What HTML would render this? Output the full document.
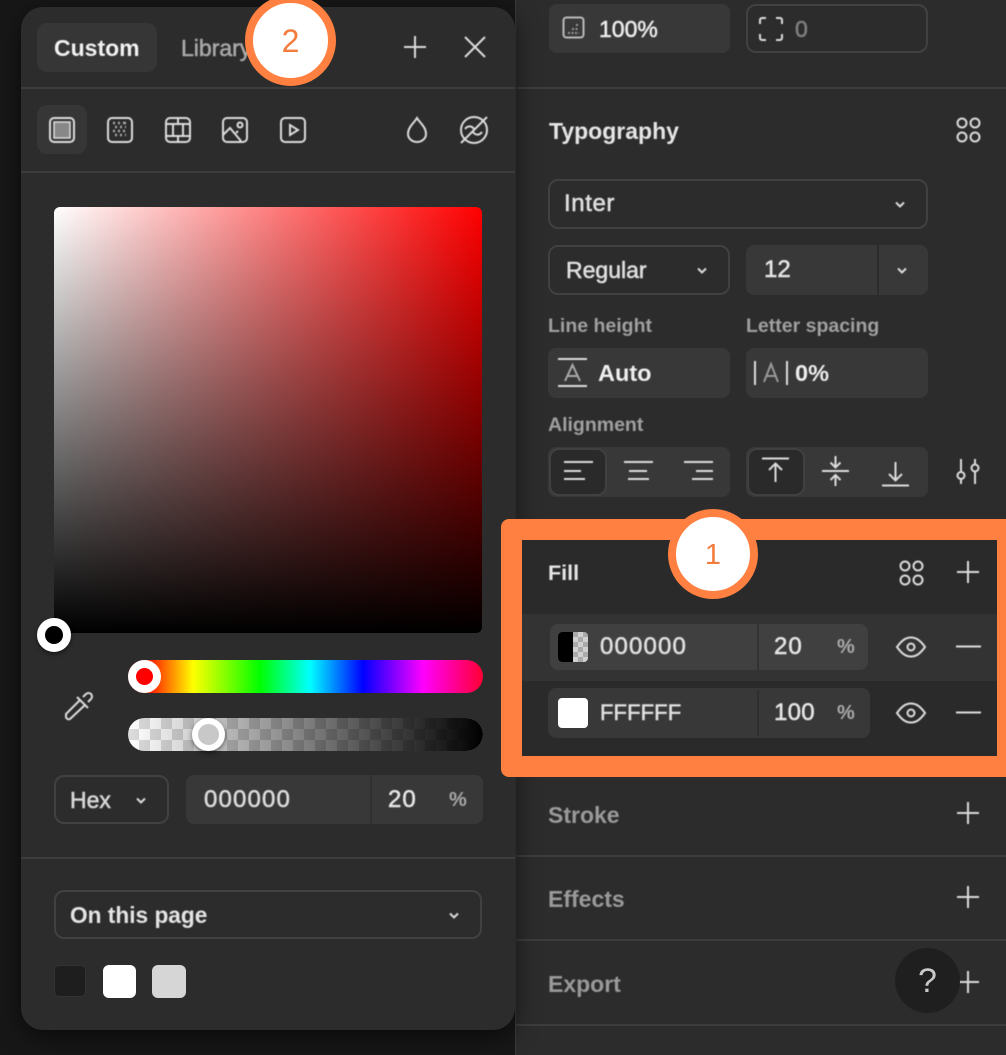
<!DOCTYPE html>
<html><head><meta charset="utf-8">
<style>
*{box-sizing:border-box;margin:0;padding:0}
html,body{width:1006px;height:1055px;overflow:hidden;background:#171717}
body{position:relative;font-family:"Liberation Sans",sans-serif;color:#e8e8e8}
.a{position:absolute}
.t{position:absolute;white-space:nowrap;font-size:23px;line-height:26px;font-weight:700;filter:blur(.5px)}
.n{font-weight:400;-webkit-text-stroke:.55px currentColor}
.num{letter-spacing:1.15px;font-size:24px}
.box{position:absolute;background:#383838;border-radius:8px}
.out{position:absolute;border:2px solid #414141;border-radius:10px}
.hl{position:absolute;height:2px;background:#3d3d3d}
svg{position:absolute;overflow:visible;fill:none;stroke:#dcdcdc;stroke-width:2;filter:blur(.45px)}
</style></head><body>
<!-- right panel -->
<div class="a" style="left:515px;top:0;width:491px;height:1055px;background:#2c2c2c;border-left:1px solid #3a3a3a"></div>
<div class="box" style="left:549px;top:4px;width:181px;height:49px"></div>
<svg style="left:562px;top:16px" width="24" height="24"><rect x="1.500" y="1.500" width="20" height="20" rx="3" stroke="#bbb"/><path d="M6 17h11M10 13h7M14 9h3" stroke="#999" stroke-width="2" stroke-dasharray="2 1.500"/></svg>
<div class="t n" style="left:599px;top:16px;color:#ececec">100%</div>
<div class="out" style="left:746px;top:4px;width:182px;height:49px"></div>
<svg style="left:758px;top:16px" width="26" height="26"><path d="M2 8V4a2 2 0 0 1 2-2h4M18 2h4a2 2 0 0 1 2 2v4M24 18v4a2 2 0 0 1-2 2h-4M8 24H4a2 2 0 0 1-2-2v-4"/></svg>
<div class="t n" style="left:795px;top:16px;color:#7f7f7f">0</div>
<div class="hl" style="left:516px;top:87px;width:490px"></div>

<div class="t" style="left:549px;top:118px;color:#e6e6e6">Typography</div>
<svg style="left:955px;top:116px" width="28" height="28"><circle cx="7" cy="7" r="4.500"/><circle cx="20" cy="7" r="4.500"/><circle cx="7" cy="21" r="4.500"/><circle cx="20" cy="21" r="4.500"/></svg>
<div class="out" style="left:548px;top:179px;width:380px;height:50px"></div>
<div class="t n" style="left:564px;top:191px;color:#e0e0e0;font-size:24px;letter-spacing:.6px">Inter</div>
<svg style="left:893px;top:200px" width="14" height="10" stroke-width="2.200"><path d="M3 2.500l4 4 4-4"/></svg>
<div class="out" style="left:548px;top:245px;width:182px;height:50px"></div>
<div class="t n" style="left:566px;top:257px;color:#e0e0e0">Regular</div>
<svg style="left:695px;top:266px" width="14" height="10" stroke-width="2.200"><path d="M3 2.500l4 4 4-4"/></svg>
<div class="box" style="left:746px;top:245px;width:182px;height:50px"></div>
<div class="a" style="left:877px;top:245px;width:2px;height:50px;background:#2c2c2c"></div>
<div class="t n" style="left:764px;top:257px;color:#e6e6e6;font-size:24px">12</div>
<svg style="left:895px;top:266px" width="14" height="10" stroke-width="2.200"><path d="M3 2.500l4 4 4-4"/></svg>

<div class="t" style="left:548px;top:313px;color:#a0a0a0;font-size:19.500px">Line height</div>
<div class="t" style="left:746px;top:313px;color:#a0a0a0;font-size:19.500px">Letter spacing</div>
<div class="box" style="left:548px;top:348px;width:182px;height:50px"></div>
<svg style="left:558px;top:357px" width="30" height="32" stroke="#bbb"><path d="M0 2h29M0 29h29"/><path d="M7 24L14.500 8 22 24M10 19h9" stroke="#aaa"/></svg>
<div class="t" style="left:598px;top:360px;color:#eee;font-size:23.500px">Auto</div>
<div class="box" style="left:746px;top:348px;width:182px;height:50px"></div>
<svg style="left:754px;top:360px" width="36" height="26" stroke="#bbb"><path d="M1 1v24M33 1v24"/><path d="M10 22L17 4l7 18M12.500 16h9" stroke="#999"/></svg>
<div class="t" style="left:795px;top:360px;color:#eee;font-size:23.500px">0%</div>

<div class="t" style="left:548px;top:412px;color:#a0a0a0;font-size:19.500px">Alignment</div>
<div class="box" style="left:548px;top:447px;width:182px;height:50px"></div>
<div class="a" style="left:549px;top:448px;width:58px;height:48px;background:#2a2a2a;border:2px solid #404040;border-radius:10px"></div>
<svg style="left:564px;top:460px" width="32" height="24" stroke="#f0f0f0"><path d="M0 2h29M0 11h17M0 19h21"/></svg>
<svg style="left:624px;top:460px" width="32" height="24" stroke="#bdbdbd"><path d="M0 2h29M5 11h18M4 19h21"/></svg>
<svg style="left:684px;top:460px" width="32" height="24" stroke="#bdbdbd"><path d="M0 2h29M12 11h17M8 19h21"/></svg>
<div class="box" style="left:746px;top:447px;width:182px;height:50px"></div>
<div class="a" style="left:747px;top:448px;width:58px;height:48px;background:#2a2a2a;border:2px solid #404040;border-radius:10px"></div>
<svg style="left:762px;top:457px" width="28" height="30" stroke="#f0f0f0"><path d="M0 1.500h27M13.500 7v18M7 13l6.500-6.500L20 13"/></svg>
<svg style="left:822px;top:455px" width="28" height="32" stroke="#bdbdbd"><path d="M0 16h27M13.500 1v11M8.500 7.500l5 5 5-5M13.500 31V20M8.500 25l5-5 5 5"/></svg>
<svg style="left:882px;top:461px" width="28" height="28" stroke="#bdbdbd"><path d="M0 24.500h27M13.500 1v18M7 13l6.500 6.500L20 13"/></svg>
<svg style="left:955px;top:458px" width="28" height="28" stroke="#d8d8d8"><path d="M6 1v13M6 21v5M20 1v5M20 14v12"/><circle cx="6" cy="17.500" r="3.500"/><circle cx="20" cy="10" r="3.500"/></svg>

<div class="t" style="left:548px;top:802px;color:#9a9a9a">Stroke</div>
<svg style="left:956px;top:801px" width="24" height="24" stroke="#b8b8b8"><path d="M12 1v22M1 12h22"/></svg>
<div class="hl" style="left:516px;top:855px;width:490px"></div>
<div class="t" style="left:548px;top:886px;color:#9a9a9a">Effects</div>
<svg style="left:956px;top:885px" width="24" height="24" stroke="#b8b8b8"><path d="M12 1v22M1 12h22"/></svg>
<div class="hl" style="left:516px;top:939px;width:490px"></div>
<div class="t" style="left:548px;top:971px;color:#9a9a9a">Export</div>
<svg style="left:956px;top:970px" width="24" height="24" stroke="#b8b8b8"><path d="M12 1v22M1 12h22"/></svg>
<div class="hl" style="left:516px;top:1024px;width:490px"></div>
<div class="a" style="left:895px;top:948px;width:65px;height:65px;border-radius:50%;background:#1f1f1f;text-align:center;line-height:66px;font-size:34px;color:#c8c8c8">?</div>

<!-- popup -->
<div class="a" style="left:21px;top:7px;width:494px;height:1023px;background:#2c2c2c;border-radius:22px;box-shadow:0 6px 24px rgba(0,0,0,.55)"></div>
<div class="box" style="left:37px;top:23px;width:120px;height:49px;background:#363636;border-radius:10px"></div>
<div class="t" style="left:54px;top:35px;color:#f2f2f2">Custom</div>
<div class="t n" style="left:181px;top:35px;color:#a8a8a8">Library</div>
<div class="a" style="left:245px;top:-5px;width:91px;height:91px;border-radius:50%;background:#fff;border:8px solid #ff8040"></div>
<div class="a" style="left:245px;top:-5px;width:91px;height:91px;line-height:93px;text-align:center;font-size:32px;color:#f47c3c">2</div>
<svg style="left:403px;top:35px" width="24" height="24" stroke="#e6e6e6"><path d="M12 1v22M1 12h22"/></svg>
<svg style="left:464px;top:36px" width="22" height="22" stroke="#e6e6e6"><path d="M1 1l20 20M21 1L1 21"/></svg>
<div class="hl" style="left:21px;top:87px;width:494px"></div>

<div class="box" style="left:37px;top:105px;width:50px;height:49px;background:#363636;border-radius:10px"></div>
<svg style="left:49px;top:117px" width="26" height="26"><rect x="1" y="1" width="24" height="24" rx="4"/><rect x="5" y="5" width="16" height="16" fill="#888" stroke="#ddd" stroke-width="1.500"/></svg>
<svg style="left:107px;top:117px" width="26" height="26"><rect x="1" y="1" width="24" height="24" rx="4"/><path d="M6 6h2M11 6h2M16 6h3M8 10h2M13 10h2M18 10h1M6 14h2M11 14h2M16 14h2M8 18h2M13 18h2M18 18h1" stroke="#aaa" stroke-width="2.500"/></svg>
<svg style="left:165px;top:117px" width="26" height="26"><rect x="1" y="1" width="24" height="24" rx="4"/><path d="M1 7h24M1 19h24M8 7v12M18 7v12M13 1v6M13 19v6"/></svg>
<svg style="left:222px;top:117px" width="26" height="26"><rect x="1" y="1" width="24" height="24" rx="4"/><path d="M1 18l7-7 11 13M14 16l2-2"/><circle cx="18" cy="8" r="2.500"/></svg>
<svg style="left:280px;top:117px" width="26" height="26"><rect x="1" y="1" width="24" height="24" rx="4"/><path d="M10 8v10l8-5z"/></svg>
<svg style="left:405px;top:116px" width="24" height="28"><path d="M12 2C9 7 3 11 3 18a9 8 0 0 0 18 0C21 11 15 7 12 2z"/></svg>
<svg style="left:459px;top:115px" width="30" height="30"><circle cx="15" cy="15" r="13"/><path d="M2 28L28 2M6 14c3-4 7-3 9 0M14 17c2 3 6 4 9 0"/></svg>
<div class="hl" style="left:21px;top:171px;width:494px"></div>

<!-- color field -->
<div class="a" style="left:54px;top:207px;width:428px;height:426px;border-radius:6px;background:linear-gradient(to bottom,rgba(0,0,0,0),#000),linear-gradient(to right,#fff,#f00)"></div>
<div class="a" style="left:37px;top:618px;width:34px;height:34px;border-radius:50%;background:#000;border:8px solid #fff;box-shadow:0 2px 4px rgba(0,0,0,.5)"></div>

<div class="a" style="left:128px;top:660px;width:355px;height:33px;border-radius:17px;background:linear-gradient(to right,#f00 17px,#ff0 65px,#0f0 132px,#0ff 182px,#00f 235px,#f0f 295px,#f03 355px)"></div>
<div class="a" style="left:128px;top:660px;width:33px;height:33px;border-radius:50%;background:#f00;border:8px solid #fff"></div>
<div class="a" style="left:128px;top:718px;width:355px;height:33px;border-radius:17px;overflow:hidden;background:repeating-conic-gradient(#dcdcdc 0 25%,#fff 0 50%) 0 0/22px 22px"><div style="width:100%;height:100%;background:linear-gradient(to right,rgba(0,0,0,0),#000)"></div></div>
<div class="a" style="left:192px;top:718px;width:33px;height:33px;border-radius:50%;background:#c8c8c8;border:6px solid #fff;box-shadow:0 2px 5px rgba(0,0,0,.5)"></div>
<svg style="left:63px;top:689px" width="32" height="32" stroke-width="1.800"><path d="M3 25L17 11l5 5L7 30a3 3 0 0 1-4-1.500zM14 8l11 11M20 8l3-3a3 3 0 0 1 5 5l-3 3"/></svg>

<div class="out" style="left:54px;top:775px;width:115px;height:49px"></div>
<div class="t n" style="left:70px;top:787px;color:#d8d8d8">Hex</div>
<svg style="left:134px;top:796px" width="14" height="10" stroke-width="2"><path d="M3 2.500l4 4 4-4"/></svg>
<div class="box" style="left:186px;top:775px;width:297px;height:49px"></div>
<div class="a" style="left:370px;top:775px;width:2px;height:49px;background:#2f2f2f"></div>
<div class="t n num" style="left:204px;top:787px;color:#dcdcdc">000000</div>
<div class="t n" style="left:388px;top:787px;color:#e6e6e6;font-size:24px;letter-spacing:1px">20</div>
<div class="t" style="left:449px;top:787px;color:#aaa;font-size:20px">%</div>
<div class="hl" style="left:21px;top:857px;width:494px"></div>

<div class="out" style="left:54px;top:890px;width:428px;height:49px"></div>
<div class="t" style="left:70px;top:902px;color:#e4e4e4;font-size:22.700px">On this page</div>
<svg style="left:447px;top:911px" width="14" height="10" stroke-width="2"><path d="M3 2.500l4 4 4-4"/></svg>
<div class="a" style="left:54px;top:965px;width:32px;height:32px;border-radius:5px;background:#1e1e1e;border:1px solid #333"></div>
<div class="a" style="left:103px;top:965px;width:33px;height:33px;border-radius:6px;background:#fff"></div>
<div class="a" style="left:152px;top:965px;width:34px;height:33px;border-radius:6px;background:#d6d6d6"></div>

<!-- Fill section (over popup) -->
<div class="a" style="left:522px;top:540px;width:475px;height:216px;background:#2a2a2a"></div>
<div class="a" style="left:522px;top:614px;width:475px;height:67px;background:#333"></div>
<div class="t" style="left:548px;top:560px;color:#e6e6e6;font-size:21.500px">Fill</div>
<svg style="left:898px;top:559px" width="28" height="28"><circle cx="7" cy="7" r="4.500"/><circle cx="20" cy="7" r="4.500"/><circle cx="7" cy="21" r="4.500"/><circle cx="20" cy="21" r="4.500"/></svg>
<svg style="left:956px;top:560px" width="24" height="24" stroke="#e0e0e0"><path d="M12 1v22M1 12h22"/></svg>

<div class="box" style="left:550px;top:624px;width:318px;height:46px;background:#404040"></div>
<div class="a" style="left:757px;top:624px;width:2px;height:46px;background:#333"></div>
<div class="a" style="left:558px;top:632px;width:30px;height:30px;border-radius:4px;overflow:hidden;background:repeating-conic-gradient(#aaa 0 25%,#d0d0d0 0 50%) 0 0/10px 10px"><div style="width:15px;height:30px;background:#000"></div></div>
<div class="t n num" style="left:600px;top:634px;color:#e0e0e0">000000</div>
<div class="t n" style="left:774px;top:634px;color:#e6e6e6;font-size:24px;letter-spacing:1px">20</div>
<div class="t" style="left:837px;top:634px;color:#aaa;font-size:20px">%</div>
<svg style="left:896px;top:636px" width="30" height="22"><path d="M1 11C6 4 10 1.500 15 1.500S24 4 29 11c-5 7-9 9.500-14 9.500S6 18 1 11z"/><circle cx="15" cy="11" r="3.500"/></svg>
<svg style="left:956px;top:645px" width="26" height="4" stroke="#e0e0e0"><path d="M0 1.500h25"/></svg>

<div class="box" style="left:548px;top:688px;width:322px;height:50px"></div>
<div class="a" style="left:757px;top:690px;width:2px;height:46px;background:#2f2f2f"></div>
<div class="a" style="left:558px;top:698px;width:30px;height:30px;border-radius:4px;background:#fff"></div>
<div class="t n" style="left:600px;top:700px;color:#e0e0e0;font-size:22px;letter-spacing:.1px">FFFFFF</div>
<div class="t n" style="left:774px;top:700px;color:#e6e6e6;font-size:24px;letter-spacing:.3px">100</div>
<div class="t" style="left:837px;top:700px;color:#aaa;font-size:20px">%</div>
<svg style="left:896px;top:702px" width="30" height="22"><path d="M1 11C6 4 10 1.500 15 1.500S24 4 29 11c-5 7-9 9.500-14 9.500S6 18 1 11z"/><circle cx="15" cy="11" r="3.500"/></svg>
<svg style="left:956px;top:711px" width="26" height="4" stroke="#e0e0e0"><path d="M0 1.500h25"/></svg>

<!-- orange frame -->
<div class="a" style="left:501px;top:519px;width:520px;height:258px;border:21px solid #ff8040;border-right-width:24px;border-radius:8px"></div>
<div class="a" style="left:668px;top:509px;width:90px;height:90px;border-radius:50%;background:#fff;border:8px solid #ff8040"></div>
<div class="a" style="left:668px;top:509px;width:90px;height:90px;line-height:92px;text-align:center;font-size:29px;color:#f47c3c">1</div>
</body></html>
